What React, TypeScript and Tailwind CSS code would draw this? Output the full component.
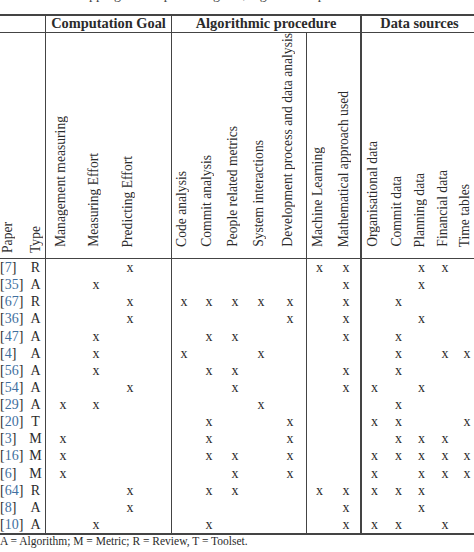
import React from 'react';

// column header labels, with the rule on the left of each group
const columns = [
  { label: 'Management measuring', cls: 'border-l border-[#444]' },
  { label: 'Measuring Effort', cls: '' },
  { label: 'Predicting Effort', cls: 'pr-[23px]' },
  { label: 'Code analysis', cls: 'border-l border-[#444]' },
  { label: 'Commit analysis', cls: '' },
  { label: 'People related metrics', cls: '' },
  { label: 'System interactions', cls: '' },
  { label: 'Development process and data analysis', cls: '' },
  { label: 'Machine Learning', cls: 'border-l border-[#444]' },
  { label: 'Mathematical approach used', cls: '' },
  { label: 'Organisational data', cls: 'border-l-2 border-[#444]' },
  { label: 'Commit data', cls: '' },
  { label: 'Planning data', cls: '' },
  { label: 'Financial data', cls: '' },
  { label: 'Time tables', cls: '' },
];

const rows: [string, string, string][] = [
  ['7', 'R', '..x' + '.....' + 'xx' + '..xx.'],
  ['35', 'A', '.x.' + '.....' + '.x' + '..x..'],
  ['67', 'R', '..x' + 'xxxxx' + '.x' + '.x...'],
  ['36', 'A', '..x' + '....x' + '.x' + '..x..'],
  ['47', 'A', '.x.' + '.xx..' + '.x' + '.x...'],
  ['4', 'A', '.x.' + 'x..x.' + '..' + '.x.xx'],
  ['56', 'A', '.x.' + '.xx..' + '.x' + '.x...'],
  ['54', 'A', '..x' + '..x..' + '.x' + 'x.x..'],
  ['29', 'A', 'xx.' + '...x.' + '..' + '.x...'],
  ['20', 'T', '...' + '.x..x' + '..' + 'xx..x'],
  ['3', 'M', 'x..' + '.x..x' + '..' + '.xxx.'],
  ['16', 'M', 'x..' + '.xx.x' + '..' + 'xxxxx'],
  ['6', 'M', 'x..' + '..x.x' + '..' + 'x.xxx'],
  ['64', 'R', '..x' + '.xx..' + 'xx' + 'xxx..'],
  ['8', 'A', '..x' + '.....' + '.x' + '..x..'],
  ['10', 'A', '.x.' + '.x...' + '.x' + 'xx.x.'],
];

function Rotated({ text }: { text: string }) {
  return <span className="rotate-180 whitespace-nowrap text-[13.6px] leading-[16px] [writing-mode:vertical-rl]">{text}</span>;
}

export default function App() {
  return (
    <div className="h-[552px] w-[474px] overflow-hidden bg-white font-['Liberation_Serif',serif] text-[#2b2b2b]">
      <div className="h-[14px] overflow-hidden">
        <p className="-mt-[13px] whitespace-nowrap pl-[22px] text-[14px] leading-[16px] text-[#444]">
          Table 3. Mapping of computation goals, algorithmic procedures and data sources (per paper)
        </p>
      </div>

      <div className="w-[477px] border-t-2 border-b-2 border-[#444]">
        <div className="grid grid-cols-[26px_19px_35px_32px_59px_25px_26px_26px_26px_32px_26px_28px_27px_23px_23px_24px_20px] grid-rows-[17px_226px_repeat(16,17.125px)] text-[14px]">
          {/* group headings */}
          <div className="col-span-2 border-b border-[#444]" />
          <div className="col-span-3 border-b border-l border-[#444] text-center text-[14.4px] font-bold leading-[14px]">
            Computation Goal
          </div>
          <div className="col-span-7 border-b border-l border-[#444] text-center text-[14.4px] font-bold leading-[14px]">
            Algorithmic procedure
          </div>
          <div className="col-span-5 border-b border-l-2 border-[#444] text-center text-[14.4px] font-bold leading-[14px]">
            Data sources
          </div>

          {/* column headings */}
          <div className="flex items-end border-b border-[#444] pb-[5px]">
            <Rotated text="Paper" />
          </div>
          <div className="flex items-end justify-center border-b border-[#444] pb-[5px]">
            <Rotated text="Type" />
          </div>
          {columns.map((c) => (
            <div key={c.label} className={`flex items-end justify-center border-b border-[#444] pb-[5px] ${c.cls}`}>
              <span className="mr-1">
                <Rotated text={c.label} />
              </span>
            </div>
          ))}

          {/* body */}
          {rows.map(([paper, type, marks]) => (
            <React.Fragment key={paper}>
              <div className="whitespace-nowrap leading-[17.125px]">
                [<span className="text-[#3f6fa0]">{paper}</span>]
              </div>
              <div className="text-center leading-[17.125px]">{type}</div>
              {columns.map((c, i) => (
                <div key={c.label} className={`text-center leading-[17.125px] ${c.cls}`}>
                  {marks[i] === 'x' ? 'x' : ''}
                </div>
              ))}
            </React.Fragment>
          ))}
        </div>
      </div>

      <p className="whitespace-nowrap text-[11.5px] leading-[13px]">A = Algorithm; M = Metric; R = Review, T = Toolset.</p>
    </div>
  );
}
